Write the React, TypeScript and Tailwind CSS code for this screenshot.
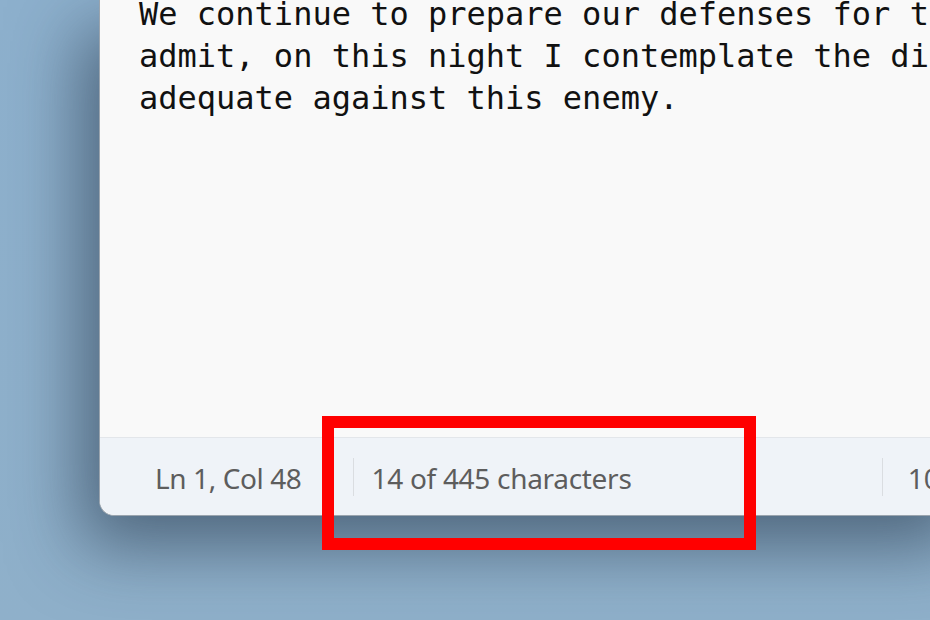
const lines = [
  'We continue to prepare our defenses for the coming storm. I must',
  'admit, on this night I contemplate the difficulty of remaining',
  'adequate against this enemy.',
]

export default function App() {
  return (
    <div className="relative w-[930px] h-[620px] overflow-hidden bg-gradient-to-b from-[#8db0cd] to-[#8fb0ca]">
      {/* notepad window, cropped at top and right */}
      <div className="ml-[99px] w-[880px] h-[516px] flex flex-col bg-[#f9f9f9] rounded-bl-[15px] border-l border-b border-[#9aa4ae] shadow-[-18px_30px_70px_rgba(35,52,72,0.6)]">
        <div className="flex-1 pl-[39px] overflow-hidden">
          <div className="-mt-[7px] font-['DejaVu_Sans_Mono','Liberation_Mono',monospace] text-[32px] leading-[42px] text-[#111] whitespace-pre">
            {lines.map((l, i) => (
              <div key={i}>{l}</div>
            ))}
          </div>
        </div>

        <div className="h-[78px] shrink-0 flex items-center bg-[#eff3f8] border-t border-[#e3e6ea] rounded-bl-[15px] font-['Noto_Sans',sans-serif] text-[28px] text-[#5d5d5d]">
          <div className="w-[254px] pl-[55px] pt-[3px] tracking-[-0.4px]">Ln 1, Col 48</div>
          <div className="w-px h-[38px] bg-[#dadde1]" />
          <div className="w-[532px] pl-[18px] pt-[3px] tracking-[-0.3px]">14 of 445 characters</div>
          <div className="w-px h-[38px] bg-[#dadde1]" />
          <div className="pl-[25px] pt-[3px]">100%</div>
        </div>
      </div>

      {/* red annotation box */}
      <div className="absolute left-[322px] top-[416px] w-[434px] h-[134px] border-[12px] border-[#ff0000]" />
    </div>
  )
}
